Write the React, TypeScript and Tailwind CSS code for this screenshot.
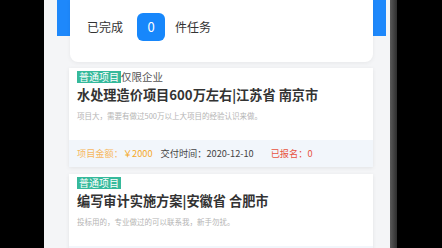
import React from 'react';

interface Task {
  title: string;
  desc: string;
  limit?: string;
  amount: string;
  date: string;
  applied: number;
}

const tasks: Task[] = [
  {
    title: '水处理造价项目600万左右|江苏省 南京市',
    desc: '项目大，需要有做过500万以上大项目的经验认识来做。',
    limit: '仅限企业',
    amount: '￥2000',
    date: '2020-12-10',
    applied: 0,
  },
  {
    title: '编写审计实施方案|安徽省 合肥市',
    desc: '投标用的，专业做过的可以联系我，新手勿扰。',
    amount: '￥1500',
    date: '2020-12-12',
    applied: 0,
  },
];

function TaskCard({ task }: { task: Task }) {
  return (
    <div className="bg-white shadow-[0_1px_4px_rgba(0,0,0,0.08)] flex flex-col shrink-0">
      <div className="px-[8px] pt-[3px] pb-[19px]">
        <div className="flex items-center h-[12px]">
          <span className="h-[12px] w-[44px] bg-[#36b99b] text-white text-[10px] leading-[12px] flex items-center justify-center">
            普通项目
          </span>
          {task.limit && <span className="text-[10.5px] leading-[12px] text-[#555]">{task.limit}</span>}
        </div>
        <div className="mt-[2px] text-[13.2px] leading-[20px] font-bold text-[#333] whitespace-nowrap">
          {task.title}
        </div>
        <div className="mt-[6px] text-[7.5px] leading-[10px] text-[#b4b4b4] whitespace-nowrap">{task.desc}</div>
      </div>
      <div className="h-[27px] bg-[#f2f6fb] px-[8px] flex items-center text-[9.2px] whitespace-nowrap">
        <span className="text-[#f7b860]">项目金额：</span>
        <span className="text-[#f5a929]">{task.amount}</span>
        <span className="ml-[8px] text-[#444]">交付时间：{task.date}</span>
        <span className="ml-[17px] text-[#e8533f]">已报名：{task.applied}</span>
      </div>
    </div>
  );
}

export default function App() {
  return (
    <div
      className="w-[442px] h-[248px] bg-black flex overflow-hidden"
      style={{ fontFamily: '"Noto Sans CJK SC", "Noto Sans", sans-serif' }}
    >
      <div className="w-[44px] shrink-0" />
      <div className="w-[346px] shrink-0 bg-[#f4f5f7] flex flex-col">
        {/* header: blue band with summary card */}
        <div className="ml-[13px] mr-[4px] px-[13px] bg-[linear-gradient(to_bottom,#1e88fb_36px,transparent_36px)]">
          <div className="h-[62px] bg-white rounded-b-[8px] shadow-[0_1px_4px_rgba(0,0,0,0.06)] flex items-center pb-[8px] pl-[17px] text-[12px] text-[#333]">
            <span>已完成</span>
            <span className="ml-[14px] w-[28px] h-[28px] rounded-[6px] bg-[#1787fb] text-white text-[13px] flex items-center justify-center">
              0
            </span>
            <span className="ml-[10px]">件任务</span>
          </div>
        </div>

        <div className="ml-[25px] mr-[17px] mt-[6px] flex flex-col gap-[7px]">
          {tasks.map((t) => (
            <TaskCard key={t.title} task={t} />
          ))}
        </div>
      </div>
      <div className="w-[7px] shrink-0 bg-[linear-gradient(to_right,#5a5a5a,#2e2e2e)]" />
    </div>
  );
}
